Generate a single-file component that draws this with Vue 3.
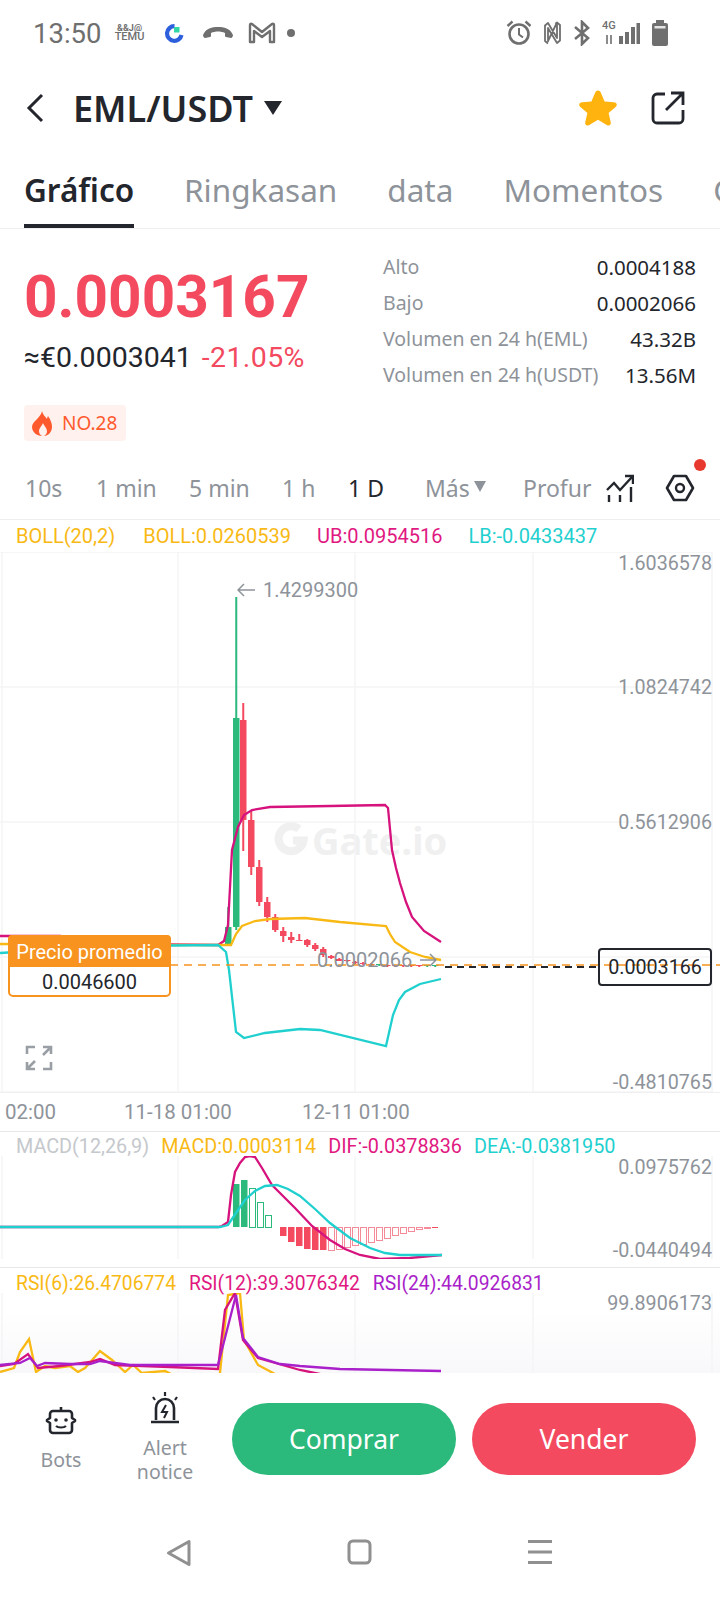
<script setup>
const tabs = ['Gráfico', 'Ringkasan', 'data', 'Momentos', 'C']
const stats = [
  { label: 'Alto', value: '0.0004188' },
  { label: 'Bajo', value: '0.0002066' },
  { label: 'Volumen en 24 h(EML)', value: '43.32B' },
  { label: 'Volumen en 24 h(USDT)', value: '13.56M' }
]
const periods = [
  { text: '10s', w: 71 },
  { text: '1 min', w: 93 },
  { text: '5 min', w: 93 },
  { text: '1 h', w: 66 },
  { text: '1 D', w: 77, active: true }
]

const gridX = [2, 178, 355, 533, 712]
const gridY = [552, 687, 822, 957, 1092]
const priceLabels = [
  { text: '1.6036578', top: 0 },
  { text: '1.0824742', top: 124 },
  { text: '0.5612906', top: 259 },
  { text: '-0.4810765', top: 519 }
]

// x, body top, body bottom, wick top, wick bottom
const candles = [
  [225, 927, 946, 907, 946, 'g'],
  [233, 718, 927, 597, 930, 'g'],
  [240, 720, 820, 703, 851, 'r'],
  [248, 820, 867, 810, 875, 'r'],
  [256, 867, 902, 860, 906, 'r'],
  [264, 902, 917, 897, 922, 'r'],
  [272, 917, 930, 914, 932, 'r'],
  [280, 931, 936, 927, 942, 'r'],
  [288, 937, 940, 932, 943, 'r'],
  [296, 940, 941, 934, 941, 'r'],
  [304, 940, 945, 939, 947, 'r'],
  [312, 945, 949, 943, 951, 'r'],
  [320, 949, 955, 947, 957, 'r'],
  [328, 956, 958, 955, 959, 'r'],
  [336, 959, 961, 958, 961, 'r'],
  [344, 960, 961, 960, 962, 'r'],
  [352, 962, 963, 961, 964, 'r'],
  [360, 963, 964, 962, 965, 'r'],
  [368, 964, 965, 963, 966, 'r'],
  [376, 964, 965, 964, 966, 'g'],
  [384, 965, 966, 964, 967, 'r'],
  [392, 965, 966, 965, 967, 'r'],
  [400, 965, 966, 965, 967, 'r'],
  [408, 965, 966, 965, 967, 'r'],
  [416, 965, 966, 965, 967, 'r'],
  [424, 965, 966, 965, 967, 'g'],
  [432, 965, 966, 965, 967, 'g']
]

const ub = '0,936 60,936 120,944 218,945 224,941 228,925 232,850 238,827 244,815 252,810 270,807 330,806 385,805 388,808 392,850 396,868 400,883 406,902 412,917 424,931 441,942'
const boll = '0,944 120,945 218,945 231,945 236,934 242,926 255,921 270,919 305,918 340,922 386,926 390,934 395,942 410,952 425,957 441,960'
const lb = '0,953 120,946 218,945 226,952 229,970 236,1032 244,1038 265,1033 300,1029 320,1030 386,1046 393,1015 399,1000 405,992 420,984 441,979'

const macdBars = [
  [233, 1184, 'g', 1], [241, 1180, 'g', 1], [249, 1188, 'g', 0], [257, 1202, 'g', 0], [265, 1215, 'g', 0],
  [280, 1236, 'r', 1], [288, 1242, 'r', 1], [296, 1246, 'r', 1], [304, 1249, 'r', 1], [312, 1250, 'r', 1], [320, 1250, 'r', 1],
  [328, 1250, 'r', 0], [336, 1249, 'r', 0], [344, 1247, 'r', 0], [352, 1245, 'r', 0], [360, 1244, 'r', 0], [368, 1242, 'r', 0],
  [376, 1240, 'r', 0], [384, 1238, 'r', 0], [392, 1235, 'r', 0], [400, 1233, 'r', 0], [408, 1231, 'r', 0], [416, 1229, 'r', 0],
  [424, 1228, 'r', 0]
]
const dif = '0,1227 218,1227 222,1226 228,1222 231,1195 235,1172 240,1163 245,1157 250,1156 255,1157 262,1168 272,1185 284,1197 295,1208 312,1226 330,1240 345,1249 360,1255 380,1259 410,1258 442,1255'
const dea = '0,1227 220,1227 228,1225 236,1213 245,1200 255,1191 265,1186 277,1185 288,1189 300,1196 315,1209 330,1223 350,1238 370,1248 385,1253 400,1255 442,1255'

const rsi6 = '0,1372 14,1368 20,1352 29,1339 36,1372 45,1366 55,1368 70,1366 78,1372 85,1368 100,1351 112,1360 125,1372 133,1365 142,1373 165,1371 175,1376 218,1376 220,1373 228,1295 240,1293 244,1340 258,1365 275,1374'
const rsi12 = '0,1366 14,1364 28,1354 38,1368 60,1366 90,1362 100,1359 115,1365 170,1367 218,1369 225,1310 235,1293 243,1340 258,1358 300,1370 330,1376'
const rsi24 = '0,1365 20,1363 30,1358 37,1366 45,1363 70,1364 90,1364 100,1361 130,1365 218,1365 236,1295 243,1338 258,1357 280,1364 300,1366 340,1369 441,1371'
</script>

<template>
  <div class="page">
    <div class="status-bar">
      <span class="clock">13:50</span>
      <div class="temu"><span class="temu-top">&amp;&amp;J@</span><span>TEMU</span></div>
      <svg class="st-g" width="20" height="20" viewBox="0 0 20 20">
        <path d="M10.500 3.200a7.300 7.300 0 1 0 7 8.800" fill="none" stroke="#2d5fdc" stroke-width="4.200" />
        <rect x="10" y="4" width="5.500" height="5.500" fill="#33d6a6" />
      </svg>
      <svg class="st-phone" width="30" height="12" viewBox="0 0 30 12">
        <path d="M0 8C3 1 9 0 15 0s12 1 15 8c0 1-1 3-2 3l-5-1c-1 0-1-1-1-2V6c-4-2-10-2-14 0v2c0 1 0 2-1 2l-5 1C1 11 0 9 0 8z" fill="#6f6f6f" />
      </svg>
      <svg class="st-m" width="28" height="22" viewBox="0 0 28 22">
        <path d="M2 20V3c0-1 1-1.500 2-1l10 8 10-8c1-.5 2 0 2 1v17h-4V9l-8 6-8-6v11z" fill="none" stroke="#6f6f6f" stroke-width="2.400" stroke-linejoin="round" />
      </svg>
      <span class="st-dot"></span>

      <div class="status-right">
        <svg width="26" height="26" viewBox="0 0 26 26">
          <circle cx="13" cy="14" r="9.500" fill="none" stroke="#6f6f6f" stroke-width="2.600" />
          <path d="M13 8v6.500l4 3" fill="none" stroke="#6f6f6f" stroke-width="2" />
          <path d="M1.500 6l5-4.500M24.500 6l-5-4.500" stroke="#6f6f6f" stroke-width="2.400" />
        </svg>
        <svg width="19" height="24" viewBox="0 0 19 24">
          <path d="M5 22.500L2 20V4.500L5 2l9 15V4l-1.500-2.500M14 1.500l3 2.500v15.500L14 22 5 7v13z" fill="none" stroke="#6f6f6f" stroke-width="1.800" stroke-linejoin="round" />
        </svg>
        <svg width="18" height="26" viewBox="0 0 18 26">
          <path d="M2 7l13 11-6 6V2l6 6L2 19" fill="none" stroke="#6f6f6f" stroke-width="2.600" />
        </svg>
        <div class="signal">
          <span class="net">4G</span>
          <svg width="38" height="24" viewBox="0 0 38 24">
            <path d="M5 13v9M9 13v9" stroke="#6f6f6f" stroke-width="1.600" />
            <rect x="17" y="14" width="4" height="8" fill="#6f6f6f" />
            <rect x="23" y="10" width="4" height="12" fill="#6f6f6f" />
            <rect x="29" y="5" width="4" height="17" fill="#6f6f6f" />
            <rect x="34.500" y="1" width="3.500" height="21" fill="#6f6f6f" />
          </svg>
        </div>
        <svg width="18" height="26" viewBox="0 0 18 26">
          <rect x="5" y="0" width="8" height="3" fill="#6f6f6f" />
          <rect x="1" y="3" width="16" height="23" rx="2" fill="#6f6f6f" />
          <rect x="3.500" y="6" width="11" height="2.500" fill="#e4e4e4" />
        </svg>
      </div>
    </div>

    <header class="top-bar">
      <svg class="back" width="20" height="32" viewBox="0 0 20 32">
        <path d="M17 3L4 16l13 13" fill="none" stroke="#23262c" stroke-width="3" />
      </svg>
      <h1>EML/USDT</h1>
      <span class="caret"></span>
      <svg class="star" width="40" height="38" viewBox="0 0 40 38">
        <path d="M20 1.500c1.500 0 2.400 1 3 2.500l3.600 8.500 9.200.8c3 .3 4 2.700 1.800 4.700l-7 6 2.100 9c.7 3-1.500 4.500-4 3L20 30.800l-8.700 5.200c-2.500 1.500-4.700 0-4-3l2.100-9-7-6c-2.200-2-1.200-4.400 1.800-4.700l9.200-.8L17 4c.6-1.500 1.500-2.500 3-2.500z" fill="#ffb30f" />
      </svg>
      <svg class="share" width="34" height="34" viewBox="0 0 34 34">
        <path d="M14 3H6a4 4 0 0 0-4 4v21a4 4 0 0 0 4 4h22a4 4 0 0 0 4-4v-9" fill="none" stroke="#23262c" stroke-width="2.800" />
        <path d="M15 19L31 3M20 2h12v12" fill="none" stroke="#23262c" stroke-width="2.800" />
      </svg>
    </header>

    <nav class="tabs">
      <a v-for="(t, i) in tabs" :key="t" :class="{ on: i === 0 }">{{ t }}</a>
    </nav>

    <section class="summary">
      <div class="price-col">
        <div class="price">0.0003167</div>
        <div class="sub"><span>≈€0.0003041</span><span class="pct">-21.05%</span></div>
        <div class="rank">
          <svg width="20" height="25" viewBox="0 0 20 25">
            <path d="M10 0c1 4 3 5 5 8 0-1 .5-2 1-3 3 4 4 8 4 11 0 5-4 9-8 9 2-1 3-3 3-5 0-3-3-5-4-8-1 3-4 5-4 8 0 2 1 4 3 5-5 0-10-4-10-9C0 10 9 7 10 0z" fill="#ff5a2e" />
          </svg>
          <span>NO.28</span>
        </div>
      </div>
      <div class="stats">
        <div v-for="s in stats" :key="s.label" class="stat">
          <span class="stat-label">{{ s.label }}</span>
          <span class="stat-value">{{ s.value }}</span>
        </div>
      </div>
    </section>

    <div class="periods">
      <span v-for="p in periods" :key="p.text" class="period" :class="{ active: p.active }" :style="{ width: p.w + 'px' }">{{ p.text }}</span>
      <span class="more">Más<i class="more-caret"></i></span>
      <span class="depth">Profur</span>
      <svg class="ind" width="28" height="28" viewBox="0 0 28 28">
        <path d="M1 16l7-7 6 7L26 3M19 2h8v8" fill="none" stroke="#23262c" stroke-width="2.400" />
        <path d="M3 21v7M14 21v7M25 13v15" fill="none" stroke="#23262c" stroke-width="2.400" />
      </svg>
      <span class="hex-wrap">
        <svg width="30" height="28" viewBox="0 0 30 28">
          <path d="M2 14L9 2h12l7 12-7 12H9z" fill="none" stroke="#23262c" stroke-width="2.600" stroke-linejoin="round" />
          <circle cx="15" cy="14" r="4" fill="none" stroke="#23262c" stroke-width="2.400" />
        </svg>
        <i class="red-dot"></i>
      </span>
    </div>

    <div class="legend boll">
      <span class="yellow first">BOLL(20,2)</span>
      <span class="yellow">BOLL:0.0260539</span>
      <span class="pink">UB:0.0954516</span>
      <span class="cyan">LB:-0.0433437</span>
    </div>

    <div class="main-chart">
      <span class="watermark">Gate.io</span>
      <svg class="canvas" width="720" height="540" viewBox="0 552 720 540">
        <path v-for="x in gridX" :key="x" :d="`M${x} 552V1092`" stroke="#f4f4f6" stroke-width="1.500" />
        <path v-for="y in gridY" :key="y" :d="`M0 ${y}H712`" stroke="#f4f4f6" stroke-width="1.500" />
        <path d="M0 551.500H720" stroke="#f0f0f2" stroke-width="1" />
        <path d="M299 829a12.500 12.500 0 1 0 4.500 11.500H293" fill="none" stroke="#f0f0f1" stroke-width="8" />
        <g v-for="c in candles" :key="c[0]" :fill="c[5] === 'g' ? '#2bb97c' : '#f34a5f'">
          <rect :x="c[0] + 2.250" :y="c[3]" width="2" :height="c[4] - c[3]" />
          <rect :x="c[0]" :y="c[1]" width="6.500" :height="c[2] - c[1]" />
        </g>
        <polyline :points="ub" fill="none" stroke="#d6127d" stroke-width="2.300" />
        <polyline :points="boll" fill="none" stroke="#f9b914" stroke-width="2.300" />
        <polyline :points="lb" fill="none" stroke="#1fd0cf" stroke-width="2.300" />
        <path d="M445 967H598" stroke="#23262c" stroke-width="2" stroke-dasharray="7 5" />
        <path d="M170 965H720" stroke="#f7931e" stroke-width="1.600" stroke-dasharray="8 6" />
      </svg>

      <span v-for="p in priceLabels" :key="p.text" class="y-label" :style="{ top: p.top + 'px' }">{{ p.text }}</span>
      <span class="peak">
        <svg width="18" height="14" viewBox="0 0 18 14"><path d="M18 7H1M7 1L1 7l6 6" fill="none" stroke="#8e939a" stroke-width="1.500" /></svg>
        1.4299300
      </span>
      <span class="low">
        0.0002066
        <svg width="17" height="14" viewBox="0 0 17 14"><path d="M0 7h16M10 1l6 6-6 6" fill="none" stroke="#8e939a" stroke-width="1.500" /></svg>
      </span>
      <div class="avg">
        <div class="avg-head">Precio promedio</div>
        <div class="avg-val">0.0046600</div>
      </div>
      <div class="last">0.0003166</div>
      <svg class="expand" width="28" height="26" viewBox="0 0 28 26">
        <path d="M2 9V2h8M18 2h8v7M2 17v7h8M26 17v7h-8M3 23l7-7M25 3l-7 7" fill="none" stroke="#9a9ea5" stroke-width="2.600" />
      </svg>
    </div>

    <div class="x-axis">
      <span style="left: 5px">02:00</span>
      <span style="left: 124px">11-18 01:00</span>
      <span style="left: 302px">12-11 01:00</span>
    </div>

    <div class="panel macd">
      <div class="legend">
        <span class="grey">MACD(12,26,9)</span>
        <span class="yellow">MACD:0.0003114</span>
        <span class="pink">DIF:-0.0378836</span>
        <span class="cyan">DEA:-0.0381950</span>
      </div>
      <svg class="panel-svg" width="720" height="103" viewBox="0 1156 720 103">
        <path v-for="x in gridX" :key="x" :d="`M${x} 1156V1260`" stroke="#f4f4f6" stroke-width="1.500" />
        <g v-for="b in macdBars" :key="b[0]">
          <rect v-if="b[3]" :x="b[0]" :y="Math.min(b[1], 1227)" width="6.500" :height="Math.abs(b[1] - 1227)" :fill="b[2] === 'g' ? '#2bb97c' : '#f34a5f'" />
          <rect v-else :x="b[0] + 0.500" :y="Math.min(b[1], 1227) + 0.500" width="6" :height="Math.abs(b[1] - 1227)" fill="none" :stroke="b[2] === 'g' ? '#2bb97c' : '#f58a98'" />
        </g>
        <path d="M432 1227.500H438" stroke="#f34a5f" stroke-width="1" />
        <polyline :points="dif" fill="none" stroke="#d6127d" stroke-width="2.300" />
        <polyline :points="dea" fill="none" stroke="#1fd0cf" stroke-width="2.300" />
      </svg>
      <span class="y-label" style="top: 24px">0.0975762</span>
      <span class="y-label" style="top: 107px">-0.0440494</span>
    </div>

    <div class="panel rsi">
      <div class="legend">
        <span class="yellow">RSI(6):26.4706774</span>
        <span class="pink">RSI(12):39.3076342</span>
        <span class="purple">RSI(24):44.0926831</span>
      </div>
      <svg class="panel-svg" width="720" height="81" viewBox="0 1293 720 81">
        <path v-for="x in gridX" :key="x" :d="`M${x} 1293V1374`" stroke="#f4f4f6" stroke-width="1.500" />
        <polyline :points="rsi6" fill="none" stroke="#f9b914" stroke-width="2.300" />
        <polyline :points="rsi12" fill="none" stroke="#d6127d" stroke-width="2.300" />
        <polyline :points="rsi24" fill="none" stroke="#a91fc9" stroke-width="2.300" />
      </svg>
      <span class="y-label" style="top: 24px">99.8906173</span>
    </div>

    <footer class="actions">
      <div class="tool bots">
        <svg width="34" height="30" viewBox="0 0 34 30">
          <path d="M17 1v4M9 5h16a3 3 0 0 1 3 3v4l3 2v1l-3 2v7a3 3 0 0 1-3 3H9a3 3 0 0 1-3-3v-7l-3-2v-1l3-2V8a3 3 0 0 1 3-3z" fill="none" stroke="#23262c" stroke-width="2.600" stroke-linejoin="round" />
          <circle cx="12" cy="14" r="1.800" fill="#23262c" />
          <circle cx="22" cy="14" r="1.800" fill="#23262c" />
          <path d="M12 20c2 2 8 2 10 0" fill="none" stroke="#23262c" stroke-width="2.200" />
        </svg>
        <span>Bots</span>
      </div>
      <div class="tool alert">
        <svg width="30" height="34" viewBox="0 0 30 34">
          <path d="M6 28V16a9 9 0 0 1 18 0v12M1 30h28" fill="none" stroke="#23262c" stroke-width="2.600" />
          <path d="M16 13l-4 7h5l-3 6" fill="none" stroke="#23262c" stroke-width="2" />
          <path d="M15 0v4M3 5l2 3M27 5l-2 3" fill="none" stroke="#23262c" stroke-width="2.200" />
        </svg>
        <span>Alert<br />notice</span>
      </div>
      <button class="btn buy">Comprar</button>
      <button class="btn sell">Vender</button>
    </footer>

    <div class="sys-nav">
      <svg width="26" height="28" viewBox="0 0 26 28">
        <path d="M23 2.500v23L2.500 14z" fill="none" stroke="#909090" stroke-width="3" stroke-linejoin="round" />
      </svg>
      <svg width="26" height="26" viewBox="0 0 26 26">
        <rect x="2" y="2" width="21" height="22" rx="4" fill="none" stroke="#909090" stroke-width="3" />
      </svg>
      <svg width="26" height="26" viewBox="0 0 26 26">
        <path d="M1 2.500h24M1 13h24M1 23.500h24" stroke="#909090" stroke-width="3" />
      </svg>
    </div>
  </div>
</template>

<style scoped>
.page {
  width: 720px;
  height: 1600px;
  overflow: hidden;
  background: #fff;
  color: #23262c;
  font-family: "Noto Sans", Roboto, sans-serif;
}

/* status bar */
.status-bar {
  display: flex;
  align-items: center;
  height: 64px;
  padding: 2px 51px 0 33px;
  box-sizing: border-box;
  color: #6f6f6f;
}
.clock {
  font-family: Roboto, sans-serif;
  font-size: 27.500px;
  width: 81px;
}
.temu {
  display: flex;
  flex-direction: column;
  align-items: center;
  width: 31px;
  font-family: Roboto, sans-serif;
  font-size: 11px;
  font-weight: 500;
  line-height: 10px;
}
.temu-top {
  font-size: 9px;
  font-weight: 700;
  line-height: 8px;
}
.st-g {
  margin-left: 19px;
}
.st-phone {
  margin-left: 19px;
}
.st-m {
  margin-left: 15px;
}
.st-dot {
  width: 8px;
  height: 8px;
  margin-left: 11px;
  border-radius: 50%;
  background: #6f6f6f;
}
.status-right {
  display: flex;
  align-items: center;
  gap: 11px;
  margin-left: auto;
}
.signal {
  position: relative;
  width: 38px;
  height: 26px;
}
.net {
  position: absolute;
  left: 0;
  top: -1px;
  font-family: Roboto, sans-serif;
  font-size: 11px;
  font-weight: 500;
}
.signal svg {
  position: absolute;
  left: 0;
  top: 2px;
}

/* title row */
.top-bar {
  display: flex;
  align-items: center;
  height: 88px;
  padding: 0 35px 0 25px;
  box-sizing: border-box;
}
.top-bar h1 {
  margin: 0 0 0 28px;
  font-size: 36px;
  font-weight: 600;
  letter-spacing: 0;
}
.caret {
  margin: 0 0 0 11px;
  border-left: 9px solid transparent;
  border-right: 9px solid transparent;
  border-top: 14px solid #23262c;
}
.star {
  margin-left: auto;
  margin-right: -3px;
}
.share {
  margin-left: 36px;
}

/* tabs */
.tabs {
  display: flex;
  height: 77px;
  padding-left: 24px;
  box-sizing: border-box;
  border-bottom: 1px solid #eceef0;
  overflow: hidden;
  gap: 50px;
  white-space: nowrap;
}
.tabs a {
  display: block;
  height: 76px;
  box-sizing: border-box;
  padding-top: 16px;
  font-size: 31.500px;
  font-weight: 400;
  color: #8e939a;
}
.tabs a.on {
  width: 110px;
  text-align: center;
  color: #23262c;
  font-weight: 600;
  border-bottom: 4px solid #23262c;
}

/* price block */
.summary {
  display: flex;
  justify-content: space-between;
  height: 219px;
  padding: 20px 24px 0 24px;
  box-sizing: border-box;
}
.price {
  font-family: Roboto, sans-serif;
  font-size: 58.500px;
  font-weight: 700;
  line-height: 76px;
  margin-top: 10px;
  color: #f34a5f;
}
.sub {
  display: flex;
  gap: 10px;
  margin-top: 5px;
  font-family: Roboto, sans-serif;
  font-size: 28.500px;
  line-height: 36px;
}
.pct {
  color: #f34a5f;
  letter-spacing: 0.4px;
}
.rank {
  display: flex;
  align-items: center;
  gap: 10px;
  width: 102px;
  height: 36px;
  margin-top: 29px;
  padding-left: 8px;
  box-sizing: border-box;
  border-radius: 4px;
  background: #fff1ed;
  color: #ff5a2e;
  font-size: 19px;
}
.stats {
  width: 313px;
}
.stat {
  display: flex;
  justify-content: space-between;
  height: 36px;
  line-height: 36px;
  font-size: 19.500px;
}
.stat-label {
  color: #8e939a;
}
.stat-value {
  color: #23262c;
  font-size: 20.500px;
}

/* period selector */
.periods {
  display: flex;
  align-items: center;
  height: 72px;
  padding: 8px 0 0 25px;
  border-bottom: 1px solid #eceef0;
  box-sizing: border-box;
  font-size: 23px;
  color: #8e939a;
  white-space: nowrap;
}
.period {
  display: block;
  flex: none;
}
.period.active {
  color: #23262c;
}
.more {
  display: flex;
  align-items: center;
  width: 98px;
}
.more-caret {
  margin-left: 4px;
  margin-top: -2px;
  border-left: 6px solid transparent;
  border-right: 6px solid transparent;
  border-top: 11px solid #8e939a;
}
.depth {
  width: 83px;
}
.hex-wrap {
  position: relative;
  margin-left: 31px;
  height: 28px;
}
.red-dot {
  position: absolute;
  right: -11px;
  top: -15px;
  width: 12px;
  height: 12px;
  border-radius: 50%;
  background: #e8392e;
}

/* indicator legends */
.legend {
  display: flex;
  gap: 12px;
  height: 32px;
  line-height: 32px;
  padding-left: 16px;
  font-family: Roboto, sans-serif;
  font-size: 19.800px;
  white-space: nowrap;
}
.legend.boll {
  gap: 26px;
  font-size: 20px;
}
.yellow {
  color: #f9b914;
}
.first {
  margin-right: 2px;
}
.pink {
  color: #e0187f;
}
.cyan {
  color: #1fd0cf;
}
.grey {
  color: #c5c8cc;
}
.purple {
  color: #a91fc9;
}

/* main chart */
.main-chart {
  position: relative;
  width: 720px;
  height: 540px;
}
.canvas {
  position: relative;
  display: block;
}
.y-label {
  position: absolute;
  right: 8px;
  font-family: Roboto, sans-serif;
  font-size: 19.700px;
  line-height: 24px;
  color: #8e939a;
}
.watermark {
  position: absolute;
  left: 312px;
  top: 263px;
  font-family: "Noto Sans", sans-serif;
  font-size: 38px;
  line-height: 50px;
  font-weight: 700;
  color: #f0f0f1;
}
.peak,
.low {
  position: absolute;
  display: flex;
  align-items: center;
  gap: 8px;
  font-family: Roboto, sans-serif;
  font-size: 20px;
  line-height: 24px;
  color: #8e939a;
}
.peak {
  left: 237px;
  top: 26px;
}
.low {
  left: 317px;
  top: 396px;
}
.avg {
  position: absolute;
  left: 8px;
  top: 383px;
  width: 163px;
  height: 62px;
  box-sizing: border-box;
  border: 2px solid #f7931e;
  border-radius: 5px;
  background: #fff;
  text-align: center;
  font-family: Roboto, sans-serif;
  font-size: 20px;
}
.avg-head {
  height: 30px;
  line-height: 30px;
  margin: -2px -2px 0;
  padding-top: 2px;
  background: #f7931e;
  color: #fff;
  border-radius: 4px 4px 0 0;
}
.avg-val {
  line-height: 31px;
  color: #23262c;
}
.last {
  position: absolute;
  left: 598px;
  top: 396px;
  width: 114px;
  height: 38px;
  box-sizing: border-box;
  border: 2px solid #23262c;
  border-radius: 4px;
  text-align: center;
  line-height: 35px;
  font-family: Roboto, sans-serif;
  font-size: 19.700px;
  color: #23262c;
}
.expand {
  position: absolute;
  left: 25px;
  top: 493px;
}

/* time axis */
.x-axis {
  position: relative;
  height: 39px;
  border-top: 1px solid #f0f0f2;
  box-sizing: border-box;
  font-family: Roboto, sans-serif;
  font-size: 20.500px;
  color: #8e939a;
}
.x-axis span {
  position: absolute;
  top: 7px;
}

/* sub charts */
.panel {
  position: relative;
  box-sizing: border-box;
  border-top: 1px solid #e6e7e9;
}
.panel-svg {
  display: block;
}
.macd {
  height: 136px;
}
.macd .legend {
  height: 24px;
  line-height: 30px;
}
.rsi {
  height: 106px;
  overflow: hidden;
  background: linear-gradient(#fff 40%, #f8f8fb);
}
.rsi .legend {
  height: 25px;
  line-height: 31px;
  font-size: 19.300px;
  gap: 13px;
}

/* bottom actions */
.actions {
  display: flex;
  align-items: flex-start;
  height: 127px;
  padding-top: 30px;
  box-sizing: border-box;
  background: #fff;
}
.tool {
  position: absolute;
  display: flex;
  flex-direction: column;
  align-items: center;
  text-align: center;
  font-size: 19.500px;
  line-height: 24px;
  color: #8e939a;
}
.bots {
  left: 21px;
  top: 1406px;
  width: 80px;
}
.bots span {
  margin-top: 12px;
}
.alert {
  left: 120px;
  top: 1392px;
  width: 90px;
}
.alert span {
  margin-top: 10px;
}
.btn {
  width: 224px;
  height: 72px;
  border: none;
  border-radius: 36px;
  color: #fff;
  font-family: "Noto Sans", sans-serif;
  font-size: 26.500px;
}
.buy {
  margin-left: 232px;
  background: #2bb97c;
}
.sell {
  margin-left: 16px;
  background: #f34a5f;
}

/* android navigation */
.sys-nav {
  position: relative;
  height: 100px;
}
.sys-nav svg {
  position: absolute;
  top: 39px;
}
.sys-nav svg:nth-child(1) {
  left: 166px;
}
.sys-nav svg:nth-child(2) {
  left: 347px;
}
.sys-nav svg:nth-child(3) {
  left: 527px;
}
</style>
